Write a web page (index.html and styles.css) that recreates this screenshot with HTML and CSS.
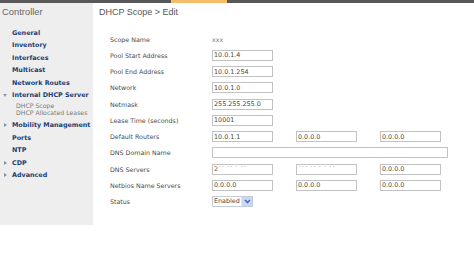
FILE: index.html
```html
<!DOCTYPE html>
<html lang="en">
<head>
<meta charset="utf-8">
<title>DHCP Scope &gt; Edit</title>
<link rel="stylesheet" href="styles.css">
</head>
<body>
<div class="topbar"><div class="tab-active"></div></div>
<div class="layout">
  <aside class="sidebar">
    <div class="side-title">Controller</div>
    <ul class="nav">
      <li class="nav-item"><span></span><span>General</span></li>
      <li class="nav-item"><span></span><span>Inventory</span></li>
      <li class="nav-item"><span></span><span>Interfaces</span></li>
      <li class="nav-item"><span></span><span>Multicast</span></li>
      <li class="nav-item"><span></span><span>Network Routes</span></li>
      <li class="nav-item"><span class="arrow-down"></span><span>Internal DHCP Server</span></li>
      <li class="subnav-wrap">
        <ul class="subnav">
          <li>DHCP Scope</li>
          <li>DHCP Allocated Leases</li>
        </ul>
      </li>
      <li class="nav-item"><span class="arrow-right"></span><span>Mobility Management</span></li>
      <li class="nav-item"><span></span><span>Ports</span></li>
      <li class="nav-item"><span></span><span>NTP</span></li>
      <li class="nav-item"><span class="arrow-right"></span><span>CDP</span></li>
      <li class="nav-item"><span class="arrow-right"></span><span>Advanced</span></li>
    </ul>
  </aside>
  <main class="main">
    <div class="page-title">DHCP Scope &gt; Edit</div>
    <div class="form">
      <div class="label">Scope Name</div>
      <div class="fields"><span class="static">xxx</span></div>

      <div class="label">Pool Start Address</div>
      <div class="fields"><input class="input" type="text" value="10.0.1.4"></div>

      <div class="label">Pool End Address</div>
      <div class="fields"><input class="input" type="text" value="10.0.1.254"></div>

      <div class="label">Network</div>
      <div class="fields"><input class="input" type="text" value="10.0.1.0"></div>

      <div class="label">Netmask</div>
      <div class="fields"><input class="input" type="text" value="255.255.255.0"></div>

      <div class="label">Lease Time (seconds)</div>
      <div class="fields"><input class="input" type="text" value="10001"></div>

      <div class="label">Default Routers</div>
      <div class="fields">
        <input class="input" type="text" value="10.0.1.1">
        <input class="input" type="text" value="0.0.0.0">
        <input class="input" type="text" value="0.0.0.0">
      </div>

      <div class="label">DNS Domain Name</div>
      <div class="fields"><input class="input wide" type="text" value=""></div>

      <div class="label">DNS Servers</div>
      <div class="fields">
        <input class="input blurred" type="text" value="2˙˙ ˙˙ ˙ ˙˙">
        <input class="input blurred" type="text" value="˙˙˙ ˙˙ ˙ ˙ ˙˙">
        <input class="input" type="text" value="0.0.0.0">
      </div>

      <div class="label">Netbios Name Servers</div>
      <div class="fields">
        <input class="input" type="text" value="0.0.0.0">
        <input class="input" type="text" value="0.0.0.0">
        <input class="input" type="text" value="0.0.0.0">
      </div>

      <div class="label">Status</div>
      <div class="fields">
        <div class="select">
          <span class="select-text">Enabled</span>
          <span class="select-btn">
            <svg width="7" height="5" viewBox="0 0 7 5"><path d="M1 1 L3.5 3.5 L6 1" fill="none" stroke="#3a5fb8" stroke-width="1.4"/></svg>
          </span>
        </div>
      </div>
    </div>
  </main>
</div>
</body>
</html>
```
FILE: styles.css
```css
html, body {
  margin: 0;
  padding: 0;
  background: #ffffff;
}

body {
  font-family: "DejaVu Sans", Verdana, sans-serif;
  width: 474px;
  height: 277px;
  overflow: hidden;
}

.topbar {
  height: 3px;
  background: #585858;
  padding-left: 171px;
}

.tab-active {
  width: 56px;
  height: 3px;
  background: #f5bd6a;
}

.layout {
  display: flex;
}

.sidebar {
  flex: none;
  width: 93px;
  height: 222px;
  background: #eeeeee;
}

.side-title {
  font: 9.4px/12px "Liberation Sans", Arial, sans-serif;
  color: #666666;
  padding: 3px 2px;
}

.nav {
  list-style: none;
  margin: 5.5px 0 0;
  padding: 0;
}

.nav-item {
  display: grid;
  grid-template-columns: 12px auto;
  align-items: center;
  height: 12.5px;
  font: bold 6.4px/12.5px "DejaVu Sans", Verdana, sans-serif;
  color: #213e72;
  white-space: nowrap;
}

.arrow-right {
  width: 0;
  height: 0;
  margin-left: 4px;
  border-left: 3px solid #7d93a8;
  border-top: 2.5px solid transparent;
  border-bottom: 2.5px solid transparent;
}

.arrow-down {
  width: 0;
  height: 0;
  margin-left: 3px;
  border-top: 3px solid #8a9bb0;
  border-left: 2.5px solid transparent;
  border-right: 2.5px solid transparent;
}

.subnav {
  list-style: none;
  margin: 0 0 2.5px;
  padding: 0 0 0 16px;
  font: 6.2px/7.5px "DejaVu Sans", Verdana, sans-serif;
  color: #7a7a7a;
  white-space: nowrap;
}

.main {
  flex: 1;
}

.page-title {
  font: 9px/12px "Liberation Sans", Arial, sans-serif;
  color: #555555;
  padding: 3px 6px;
}

.form {
  display: grid;
  grid-template-columns: 102px auto;
  grid-auto-rows: 16.25px;
  align-items: center;
  margin: 10px 0 0 17px;
}

.label {
  font: 6.3px/9px "DejaVu Sans", Verdana, sans-serif;
  color: #4a4a4a;
  white-space: nowrap;
}

.fields {
  display: flex;
  gap: 23px;
  align-items: center;
}

.static {
  font: 6.3px/9px "DejaVu Sans", Verdana, sans-serif;
  color: #808080;
}

.input {
  box-sizing: border-box;
  width: 61px;
  height: 11px;
  margin: 0;
  padding: 0 1px;
  border: 1px solid #c2c2c2;
  border-radius: 0;
  background: #ffffff;
  font: 6.4px/9px "DejaVu Sans", Verdana, sans-serif;
  color: #4a4a4a;
  outline: none;
}

.input.wide {
  width: 236px;
}

.input.blurred {
  color: #666666;
}

.select {
  box-sizing: border-box;
  display: flex;
  align-items: stretch;
  width: 41px;
  height: 11px;
  border: 1px solid #c3cad8;
  background: #ffffff;
}

.select-text {
  flex: 1;
  padding-left: 1px;
  font: 6.4px/9px "DejaVu Sans", Verdana, sans-serif;
  color: #4a4a4a;
}

.select-btn {
  display: flex;
  align-items: center;
  justify-content: center;
  width: 10px;
  background: #c9d8f6;
  border-left: 1px solid #dfe7f8;
}
```
